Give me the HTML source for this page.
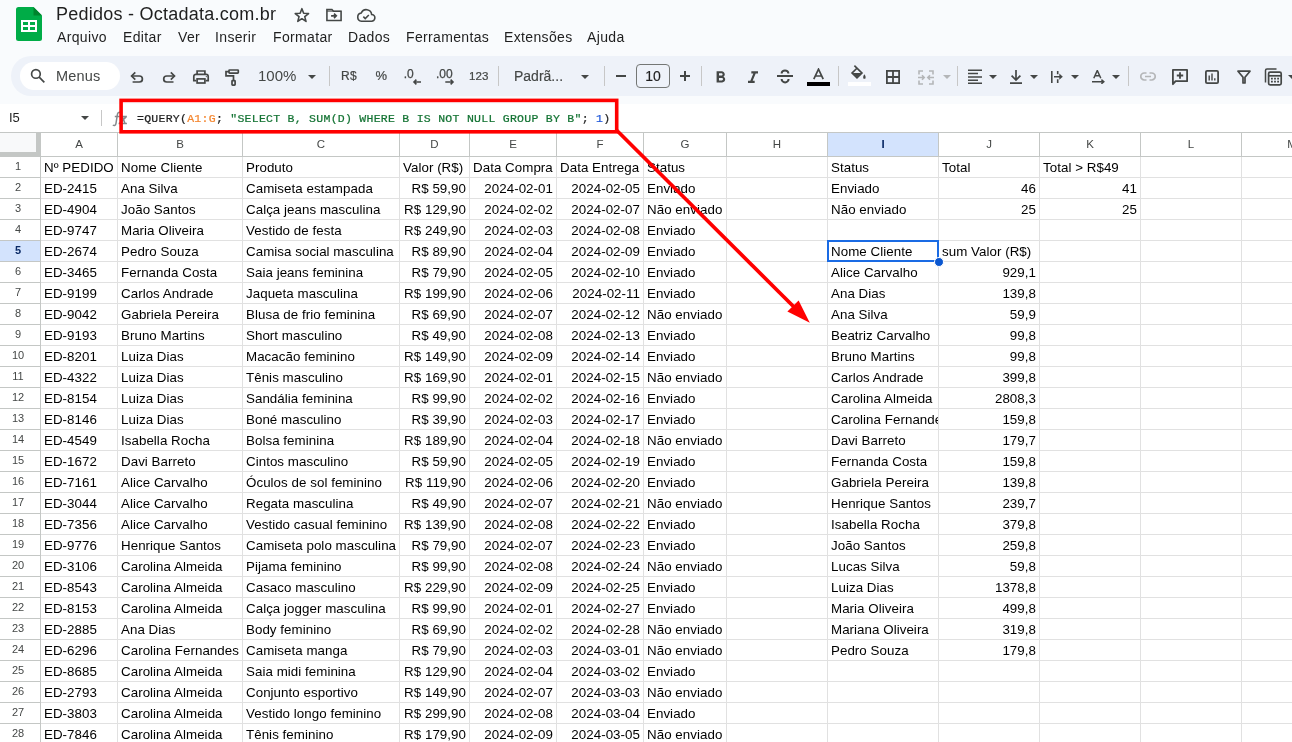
<!DOCTYPE html>
<html><head><meta charset="utf-8">
<style>
html,body{margin:0;padding:0}
body{width:1292px;height:742px;overflow:hidden;position:relative;will-change:transform;background:#f9fbfd;font-family:"Liberation Sans",sans-serif;color:#1f1f1f}
.a{position:absolute}
.ln{position:absolute}
.title{position:absolute;left:56px;top:3px;font-size:18px;line-height:22px;letter-spacing:0.25px;color:#1f1f1f;white-space:nowrap}
.menu{position:absolute;top:28px;font-size:14px;line-height:18px;letter-spacing:0.35px;color:#1f1f1f;white-space:nowrap}
.tb{position:absolute;left:11px;top:56px;width:1400px;height:40px;border-radius:20px;background:#eef2f9}
.sep{position:absolute;top:66px;width:1px;height:20px;background:#c7c7c7}
.ic{position:absolute}
.ttxt{position:absolute;font-size:14px;line-height:18px;color:#444746;white-space:nowrap}
.fbar{position:absolute;left:0;top:104px;width:1292px;height:28px;background:#fff}
.sheet{position:absolute;left:0;top:132px;width:1292px;height:610px;background:#fff}
.ch{position:absolute;top:133px;height:23px;line-height:23px;text-align:center;font-size:11.5px;color:#444746}
.ch.sel{color:#0a2a66;font-weight:bold}
.rn{position:absolute;left:0;width:36px;height:20px;line-height:20px;text-align:center;font-size:11px;color:#444746}
.rn.sel{color:#0a2a66;font-weight:bold}
.c{position:absolute;height:20px;line-height:21px;font-size:13.333px;letter-spacing:0.05px;color:#000;white-space:nowrap;overflow:hidden;box-sizing:border-box;padding:0 3px}
.c.r{text-align:right}
</style></head><body>

<!-- Sheets logo -->
<svg class="a" style="left:16px;top:7px" width="26" height="34" viewBox="0 0 26 34">
  <path d="M2.5 0H17.5L26 8.5V31.5Q26 34 23.5 34H2.5Q0 34 0 31.5V2.5Q0 0 2.5 0Z" fill="#00ac47"/>
  <path d="M17.5 0L26 8.5H17.5Z" fill="#00832d"/>
  <rect x="5" y="13" width="16" height="12" fill="#fff"/>
  <rect x="7" y="15" width="5" height="3" fill="#00ac47"/>
  <rect x="14" y="15" width="5" height="3" fill="#00ac47"/>
  <rect x="7" y="20" width="5" height="3" fill="#00ac47"/>
  <rect x="14" y="20" width="5" height="3" fill="#00ac47"/>
</svg>

<div class="title">Pedidos - Octadata.com.br</div>
<!-- star -->
<svg class="a" style="left:285px;top:0px" width="34" height="30" viewBox="0 0 34 30"><path d="M16.90 8.70 L18.66 13.27 L23.56 13.54 L19.75 16.63 L21.01 21.36 L16.90 18.70 L12.79 21.36 L14.05 16.63 L10.24 13.54 L15.14 13.27Z" fill="none" stroke="#444746" stroke-width="1.6" stroke-linejoin="round"/></svg>
<!-- folder move -->
<svg class="a" style="left:324px;top:5px" width="20" height="20" viewBox="0 0 24 24"><path d="M3.5 5.5h6l2 2h9v11h-17z" fill="none" stroke="#444746" stroke-width="1.9"/><path d="M3.5 7.5h17" stroke="#444746" stroke-width="1"/><path d="M8.5 13h6M12 10.3l2.8 2.7-2.8 2.7" fill="none" stroke="#444746" stroke-width="1.9"/></svg>
<!-- cloud done -->
<svg class="a" style="left:356px;top:5px" width="20" height="20" viewBox="0 0 24 24"><path d="M6.5 19.5h12a4 4 0 0 0 .3-8A6.5 6.5 0 0 0 6.3 9.6 5 5 0 0 0 6.5 19.5z" fill="none" stroke="#444746" stroke-width="1.9"/><path d="M8.8 14l2.3 2.3 4.3-4.3" fill="none" stroke="#444746" stroke-width="1.9"/></svg>

<div class="menu" style="left:57px">Arquivo</div>
<div class="menu" style="left:123px">Editar</div>
<div class="menu" style="left:178px">Ver</div>
<div class="menu" style="left:215px">Inserir</div>
<div class="menu" style="left:273px">Formatar</div>
<div class="menu" style="left:348px">Dados</div>
<div class="menu" style="left:406px">Ferramentas</div>
<div class="menu" style="left:504px">Extensões</div>
<div class="menu" style="left:587px">Ajuda</div>

<!-- toolbar -->
<div class="tb"></div>
<div class="a" style="left:20px;top:62px;width:100px;height:28px;border-radius:14px;background:#fff"></div>
<svg class="a" style="left:28px;top:66px" width="20" height="20" viewBox="0 0 24 24"><circle cx="9.5" cy="9.5" r="5.2" fill="none" stroke="#444746" stroke-width="2"/><path d="M13.4 13.4L19.6 19.6" stroke="#444746" stroke-width="2"/></svg>
<div class="ttxt" style="left:56px;top:66.5px;font-size:14.5px;letter-spacing:0.2px">Menus</div>

<!-- undo / redo / print / paint -->
<svg class="a" style="left:0;top:0" width="260" height="100" viewBox="0 0 260 100"><g fill="none" stroke="#444746" stroke-width="1.7">
<path d="M135.3 72.3L131.6 76l3.7 3.7"/><path d="M131.8 76H139.4a3 3 0 0 1 0 6H132.6"/>
<path d="M170.8 72.3L174.5 76l-3.7 3.7"/><path d="M174.3 76H166.7a3 3 0 0 0 0 6H173.5"/>
<path d="M197.1 74.2V71h7.8v3.2"/><path d="M196.3 80.6H193.8V76.4a2.1 2.1 0 0 1 2.1-2.1h10.2a2.1 2.1 0 0 1 2.1 2.1v4.2h-2.5"/><rect x="197.1" y="78.9" width="7.8" height="4.1"/>
<rect x="229" y="70" width="9.3" height="3.2" rx="0.6"/><path d="M229 71.6H226V75.9H233.5V80.3"/><rect x="232" y="80.6" width="3.1" height="4.6" rx="0.6"/>
</g><circle cx="206.3" cy="76.6" r="0.6" fill="#444746"/></svg>

<div class="ttxt" style="left:258px;top:67px;font-size:15px">100%</div>
<svg class="ic" style="left:308px;top:75px" width="8" height="4" viewBox="0 0 8 4"><path d="M0 0h8L4 4z" fill="#444746"/></svg>
<div class="sep" style="left:329px"></div>
<div class="ttxt" style="left:341px;top:67px;font-size:12px;letter-spacing:0.3px;-webkit-text-stroke:0.2px #444746">R$</div>
<div class="ttxt" style="left:375.5px;top:67px;font-size:13px;-webkit-text-stroke:0.2px #444746">%</div>
<svg class="ic" style="left:402px;top:64px" width="22" height="22" viewBox="0 0 22 22"><text x="1.7" y="14" font-family="Liberation Sans" font-size="12" fill="#444746" stroke="#444746" stroke-width="0.25">.0</text><path d="M19 18H12M14.4 15.6L12 18l2.4 2.4" fill="none" stroke="#444746" stroke-width="1.6"/></svg>
<svg class="ic" style="left:434px;top:64px" width="22" height="22" viewBox="0 0 22 22"><text x="2" y="14" font-family="Liberation Sans" font-size="12" fill="#444746" stroke="#444746" stroke-width="0.25">.00</text><path d="M11.3 18h7M16.6 15.6L19 18l-2.4 2.4" fill="none" stroke="#444746" stroke-width="1.6"/></svg>
<div class="ttxt" style="left:469px;top:67px;font-size:11.6px;-webkit-text-stroke:0.2px #444746">123</div>
<div class="sep" style="left:498px"></div>
<div class="ttxt" style="left:514px;top:67px;font-size:14px;-webkit-text-stroke:0.15px #444746">Padrã...</div>
<svg class="ic" style="left:581px;top:75px" width="8" height="4" viewBox="0 0 8 4"><path d="M0 0h8L4 4z" fill="#444746"/></svg>
<div class="sep" style="left:604px"></div>
<div class="a" style="left:616px;top:75px;width:10px;height:2px;background:#444746"></div>
<div class="a" style="left:636px;top:64px;width:32px;height:22px;border:1px solid #747775;border-radius:4px;box-sizing:content-box;text-align:center;line-height:22px;font-size:14px;color:#1f1f1f;-webkit-text-stroke:0.15px #1f1f1f">10</div>
<div class="a" style="left:680px;top:75px;width:10px;height:2px;background:#444746"></div>
<div class="a" style="left:684px;top:71px;width:2px;height:10px;background:#444746"></div>
<div class="sep" style="left:701px"></div>
<!-- B I S A -->
<svg class="ic" style="left:711px;top:68px" width="19.2" height="19.2" viewBox="0 0 24 24"><path d="M15.6 10.79c.97-.67 1.65-1.77 1.65-2.79 0-2.26-1.75-4-4-4H7v14h7.04c2.09 0 3.71-1.7 3.71-3.79 0-1.52-.86-2.82-2.15-3.42zM10 6.5h3c.83 0 1.5.67 1.5 1.5s-.67 1.5-1.5 1.5h-3v-3zm3.5 9H10v-3h3.5c.83 0 1.5.67 1.5 1.5s-.67 1.5-1.5 1.5z" fill="#444746"/></svg>
<svg class="ic" style="left:743px;top:67.6px" width="20" height="20" viewBox="0 0 24 24"><path d="M10 4v2.6h2.4l-3.6 8.8H6V18h8v-2.6h-2.4l3.6-8.8H18V4z" fill="#444746"/></svg>
<svg class="ic" style="left:776px;top:69px" width="18" height="16" viewBox="0 0 18 16"><rect x="1" y="6" width="16" height="2" fill="#444746"/><path d="M5.6 4.6A3.4 3.2 0 0 1 12.4 4.6" fill="none" stroke="#444746" stroke-width="2"/><path d="M5.6 10A3.5 3.4 0 0 0 12.6 10" fill="none" stroke="#444746" stroke-width="2"/></svg>
<svg class="ic" style="left:807px;top:68px" width="23" height="18" viewBox="0 0 23 18"><path d="M6.8 11.2L11.5 1.2 16.2 11.2M8.4 8h6.2" fill="none" stroke="#444746" stroke-width="1.7"/><rect x="0" y="14" width="23" height="4" fill="#000"/></svg>
<div class="sep" style="left:838px"></div>
<svg class="a" style="left:840px;top:60px" width="40" height="30" viewBox="840 60 40 30"><path d="M854.4 65.6L862 73.1 857 77.9 852 73.1 856.9 68.3" fill="none" stroke="#444746" stroke-width="1.6" stroke-linejoin="miter"/><path d="M852.4 73.1H861.6L857 77.6z" fill="#444746"/><path d="M864.4 74.3q1.9 2.3 1.2 3.6a1.25 1.25 0 0 1-2.4 0q-.7-1.3 1.2-3.6z" fill="#444746"/><rect x="848" y="82" width="23" height="4" fill="#fff"/></svg>
<svg class="ic" style="left:885px;top:69px" width="16" height="16" viewBox="0 0 16 16"><rect x="1.9" y="1.9" width="12.2" height="12.2" fill="none" stroke="#444746" stroke-width="1.8"/><path d="M8 1v14M1 8h14" stroke="#444746" stroke-width="1.8"/></svg>
<svg class="ic" style="left:917px;top:70px" width="18" height="15" viewBox="0 0 18 15"><path d="M2 4.5V1h4M12 1h4v3.5M2 10.5V14h4M12 14h4v-3.5M1 7.5h6M5 5.3l2.2 2.2L5 9.7M17 7.5h-6M13 5.3l-2.2 2.2L13 9.7" fill="none" stroke="#b4b6b8" stroke-width="1.6"/></svg>
<svg class="ic" style="left:943px;top:75px" width="8" height="4" viewBox="0 0 8 4"><path d="M0 0h8L4 4z" fill="#b4b6b8"/></svg>
<div class="sep" style="left:957px"></div>
<svg class="ic" style="left:968px;top:69px" width="15" height="15" viewBox="0 0 15 15"><path d="M0 1.2h14M0 4.6h10M0 8h14M0 11.2h10M0 14.3h14" stroke="#444746" stroke-width="1.5"/></svg>
<svg class="ic" style="left:989px;top:75px" width="8" height="4" viewBox="0 0 8 4"><path d="M0 0h8L4 4z" fill="#444746"/></svg>
<svg class="ic" style="left:1010px;top:70px" width="12" height="14" viewBox="0 0 12 14"><path d="M6 0v9.5M1.6 5.6L6 10l4.4-4.4M0 13.1h12" fill="none" stroke="#444746" stroke-width="1.7"/></svg>
<svg class="ic" style="left:1030px;top:75px" width="8" height="4" viewBox="0 0 8 4"><path d="M0 0h8L4 4z" fill="#444746"/></svg>
<svg class="a" style="left:1040px;top:60px" width="30" height="30" viewBox="1040 60 30 30"><path d="M1051.8 71V83M1057.7 71V74.2M1057.7 79.2V83M1054 76.7H1060" fill="none" stroke="#444746" stroke-width="1.6"/><path d="M1059.3 73.6L1062.8 76.7 1059.3 79.8z" fill="#444746"/></svg>
<svg class="ic" style="left:1071px;top:75px" width="8" height="4" viewBox="0 0 8 4"><path d="M0 0h8L4 4z" fill="#444746"/></svg>
<svg class="ic" style="left:1092px;top:70px" width="13" height="14" viewBox="0 0 13 14"><path d="M1.8 8.3L5.3 0.5 8.8 8.3M2.9 5.8h4.8M0 11.7h11.5M9.4 9.6l2.4 2.1-2.4 2.1" fill="none" stroke="#444746" stroke-width="1.5"/></svg>
<svg class="ic" style="left:1112px;top:75px" width="8" height="4" viewBox="0 0 8 4"><path d="M0 0h8L4 4z" fill="#444746"/></svg>
<div class="sep" style="left:1128px"></div>
<svg class="ic" style="left:1140px;top:72px" width="16" height="9" viewBox="0 0 16 9"><path d="M6.5 1H4.3a3.5 3.5 0 0 0 0 7h2.2M9.5 1h2.2a3.5 3.5 0 0 1 0 7H9.5M5 4.5h6" fill="none" stroke="#b4b6b8" stroke-width="1.7"/></svg>
<svg class="ic" style="left:1171px;top:68px" width="18" height="18" viewBox="0 0 18 18"><path d="M1.9 1.9h14.2v11.3H4.6L1.9 16.2z" fill="none" stroke="#444746" stroke-width="1.8" stroke-linejoin="round"/><path d="M9 4.3v6.4M5.8 7.5h6.4" stroke="#444746" stroke-width="1.8"/></svg>
<svg class="ic" style="left:1204px;top:69px" width="16" height="16" viewBox="0 0 16 16"><rect x="1.9" y="1.9" width="12.2" height="12.2" rx="1.2" fill="none" stroke="#444746" stroke-width="1.8"/><path d="M5.2 6.5v5M8 4.4v7.1M10.8 9.3v2.2" stroke="#444746" stroke-width="1.4"/></svg>
<svg class="ic" style="left:1237px;top:70px" width="14" height="14" viewBox="0 0 14 14"><path d="M1 1.2h12L8 7.2V13H6V7.2z" fill="none" stroke="#444746" stroke-width="1.7" stroke-linejoin="round"/></svg>
<svg class="ic" style="left:1264px;top:68px" width="19" height="18" viewBox="0 0 19 18"><path d="M1.5 14.5V2.5a1.5 1.5 0 0 1 1.5-1.5h9.5" fill="none" stroke="#444746" stroke-width="1.5"/><rect x="4.6" y="4.2" width="12.6" height="12.6" rx="1.5" fill="none" stroke="#444746" stroke-width="1.7"/><path d="M4.6 7.8h12.6" stroke="#444746" stroke-width="1.7"/><path d="M7 10.6h1.8M10.1 10.6h1.8M13.2 10.6h1.8M7 13.6h1.8M10.1 13.6h1.8M13.2 13.6h1.8" stroke="#444746" stroke-width="1.8"/></svg>
<svg class="ic" style="left:1288px;top:75px" width="8" height="4" viewBox="0 0 8 4"><path d="M0 0h8L4 4z" fill="#444746"/></svg>

<!-- formula bar -->
<div class="fbar"></div>
<div class="a" style="left:9px;top:110px;font-size:13px;line-height:16px;color:#1f1f1f">I5</div>
<svg class="ic" style="left:81px;top:116px" width="8" height="4" viewBox="0 0 8 4"><path d="M0 0h8L4 4z" fill="#444746"/></svg>
<div class="a" style="left:101px;top:110px;width:1px;height:16px;background:#c7c7c7"></div>
<svg class="a" style="left:0;top:0" width="140" height="132" viewBox="0 0 140 132"><g fill="none" stroke="#85898c" stroke-width="1.5"><path d="M120.2 112.2C118.4 111.9 117.6 113 117.3 115L116 123.3C115.6 125.6 114.3 126 112.8 125"/><path d="M114.8 116.6H119.6M122 116.6H126.9M118.6 123.4H126.9M122.3 116.6L125 123.4M126.3 116.6L119.6 123.4"/></g></svg>
<div class="a" style="left:137px;top:112px;font-family:'Liberation Mono',monospace;font-size:11.5px;letter-spacing:0.27px;line-height:14px;color:#1f1f1f;white-space:pre;-webkit-text-stroke:0.22px currentColor">=QUERY(<span style="color:#f4852e">A1:G</span>; <span style="color:#137333">"SELECT B, SUM(D) WHERE B IS NOT NULL GROUP BY B"</span>; <span style="color:#1a54d8">1</span>)</div>

<!-- sheet -->
<div class="sheet"></div>
<!-- corner -->
<div class="a" style="left:0;top:133px;width:36px;height:19px;background:#f8f9fa"></div>
<div class="a" style="left:36px;top:133px;width:4px;height:23px;background:#c4c7c5"></div>
<div class="a" style="left:0;top:152px;width:40px;height:4px;background:#c4c7c5"></div>

<div class="ln" style="left:0;top:132px;width:1292px;height:1px;background:#c4c7c5"></div>
<div class="ln" style="left:0;top:156px;width:1292px;height:1px;background:#c4c7c5"></div>
<div class="ln" style="left:117px;top:132px;width:1px;height:24px;background:#c4c7c5"></div>
<div class="ln" style="left:242px;top:132px;width:1px;height:24px;background:#c4c7c5"></div>
<div class="ln" style="left:399px;top:132px;width:1px;height:24px;background:#c4c7c5"></div>
<div class="ln" style="left:469px;top:132px;width:1px;height:24px;background:#c4c7c5"></div>
<div class="ln" style="left:556px;top:132px;width:1px;height:24px;background:#c4c7c5"></div>
<div class="ln" style="left:643px;top:132px;width:1px;height:24px;background:#c4c7c5"></div>
<div class="ln" style="left:726px;top:132px;width:1px;height:24px;background:#c4c7c5"></div>
<div class="ln" style="left:827px;top:132px;width:1px;height:24px;background:#c4c7c5"></div>
<div class="ln" style="left:938px;top:132px;width:1px;height:24px;background:#c4c7c5"></div>
<div class="ln" style="left:1039px;top:132px;width:1px;height:24px;background:#c4c7c5"></div>
<div class="ln" style="left:1140px;top:132px;width:1px;height:24px;background:#c4c7c5"></div>
<div class="ln" style="left:1241px;top:132px;width:1px;height:24px;background:#c4c7c5"></div>
<div class="ln" style="left:40px;top:132px;width:1px;height:610px;background:#c4c7c5"></div>
<div class="ln" style="left:0;top:177px;width:40px;height:1px;background:#c4c7c5"></div>
<div class="ln" style="left:41px;top:177px;width:1251px;height:1px;background:#e1e1e1"></div>
<div class="ln" style="left:0;top:198px;width:40px;height:1px;background:#c4c7c5"></div>
<div class="ln" style="left:41px;top:198px;width:1251px;height:1px;background:#e1e1e1"></div>
<div class="ln" style="left:0;top:219px;width:40px;height:1px;background:#c4c7c5"></div>
<div class="ln" style="left:41px;top:219px;width:1251px;height:1px;background:#e1e1e1"></div>
<div class="ln" style="left:0;top:240px;width:40px;height:1px;background:#c4c7c5"></div>
<div class="ln" style="left:41px;top:240px;width:1251px;height:1px;background:#e1e1e1"></div>
<div class="ln" style="left:0;top:261px;width:40px;height:1px;background:#c4c7c5"></div>
<div class="ln" style="left:41px;top:261px;width:1251px;height:1px;background:#e1e1e1"></div>
<div class="ln" style="left:0;top:282px;width:40px;height:1px;background:#c4c7c5"></div>
<div class="ln" style="left:41px;top:282px;width:1251px;height:1px;background:#e1e1e1"></div>
<div class="ln" style="left:0;top:303px;width:40px;height:1px;background:#c4c7c5"></div>
<div class="ln" style="left:41px;top:303px;width:1251px;height:1px;background:#e1e1e1"></div>
<div class="ln" style="left:0;top:324px;width:40px;height:1px;background:#c4c7c5"></div>
<div class="ln" style="left:41px;top:324px;width:1251px;height:1px;background:#e1e1e1"></div>
<div class="ln" style="left:0;top:345px;width:40px;height:1px;background:#c4c7c5"></div>
<div class="ln" style="left:41px;top:345px;width:1251px;height:1px;background:#e1e1e1"></div>
<div class="ln" style="left:0;top:366px;width:40px;height:1px;background:#c4c7c5"></div>
<div class="ln" style="left:41px;top:366px;width:1251px;height:1px;background:#e1e1e1"></div>
<div class="ln" style="left:0;top:387px;width:40px;height:1px;background:#c4c7c5"></div>
<div class="ln" style="left:41px;top:387px;width:1251px;height:1px;background:#e1e1e1"></div>
<div class="ln" style="left:0;top:408px;width:40px;height:1px;background:#c4c7c5"></div>
<div class="ln" style="left:41px;top:408px;width:1251px;height:1px;background:#e1e1e1"></div>
<div class="ln" style="left:0;top:429px;width:40px;height:1px;background:#c4c7c5"></div>
<div class="ln" style="left:41px;top:429px;width:1251px;height:1px;background:#e1e1e1"></div>
<div class="ln" style="left:0;top:450px;width:40px;height:1px;background:#c4c7c5"></div>
<div class="ln" style="left:41px;top:450px;width:1251px;height:1px;background:#e1e1e1"></div>
<div class="ln" style="left:0;top:471px;width:40px;height:1px;background:#c4c7c5"></div>
<div class="ln" style="left:41px;top:471px;width:1251px;height:1px;background:#e1e1e1"></div>
<div class="ln" style="left:0;top:492px;width:40px;height:1px;background:#c4c7c5"></div>
<div class="ln" style="left:41px;top:492px;width:1251px;height:1px;background:#e1e1e1"></div>
<div class="ln" style="left:0;top:513px;width:40px;height:1px;background:#c4c7c5"></div>
<div class="ln" style="left:41px;top:513px;width:1251px;height:1px;background:#e1e1e1"></div>
<div class="ln" style="left:0;top:534px;width:40px;height:1px;background:#c4c7c5"></div>
<div class="ln" style="left:41px;top:534px;width:1251px;height:1px;background:#e1e1e1"></div>
<div class="ln" style="left:0;top:555px;width:40px;height:1px;background:#c4c7c5"></div>
<div class="ln" style="left:41px;top:555px;width:1251px;height:1px;background:#e1e1e1"></div>
<div class="ln" style="left:0;top:576px;width:40px;height:1px;background:#c4c7c5"></div>
<div class="ln" style="left:41px;top:576px;width:1251px;height:1px;background:#e1e1e1"></div>
<div class="ln" style="left:0;top:597px;width:40px;height:1px;background:#c4c7c5"></div>
<div class="ln" style="left:41px;top:597px;width:1251px;height:1px;background:#e1e1e1"></div>
<div class="ln" style="left:0;top:618px;width:40px;height:1px;background:#c4c7c5"></div>
<div class="ln" style="left:41px;top:618px;width:1251px;height:1px;background:#e1e1e1"></div>
<div class="ln" style="left:0;top:639px;width:40px;height:1px;background:#c4c7c5"></div>
<div class="ln" style="left:41px;top:639px;width:1251px;height:1px;background:#e1e1e1"></div>
<div class="ln" style="left:0;top:660px;width:40px;height:1px;background:#c4c7c5"></div>
<div class="ln" style="left:41px;top:660px;width:1251px;height:1px;background:#e1e1e1"></div>
<div class="ln" style="left:0;top:681px;width:40px;height:1px;background:#c4c7c5"></div>
<div class="ln" style="left:41px;top:681px;width:1251px;height:1px;background:#e1e1e1"></div>
<div class="ln" style="left:0;top:702px;width:40px;height:1px;background:#c4c7c5"></div>
<div class="ln" style="left:41px;top:702px;width:1251px;height:1px;background:#e1e1e1"></div>
<div class="ln" style="left:0;top:723px;width:40px;height:1px;background:#c4c7c5"></div>
<div class="ln" style="left:41px;top:723px;width:1251px;height:1px;background:#e1e1e1"></div>
<div class="ln" style="left:0;top:744px;width:40px;height:1px;background:#c4c7c5"></div>
<div class="ln" style="left:41px;top:744px;width:1251px;height:1px;background:#e1e1e1"></div>
<div class="ln" style="left:117px;top:157px;width:1px;height:585px;background:#e1e1e1"></div>
<div class="ln" style="left:242px;top:157px;width:1px;height:585px;background:#e1e1e1"></div>
<div class="ln" style="left:399px;top:157px;width:1px;height:585px;background:#e1e1e1"></div>
<div class="ln" style="left:469px;top:157px;width:1px;height:585px;background:#e1e1e1"></div>
<div class="ln" style="left:556px;top:157px;width:1px;height:585px;background:#e1e1e1"></div>
<div class="ln" style="left:643px;top:157px;width:1px;height:585px;background:#e1e1e1"></div>
<div class="ln" style="left:726px;top:157px;width:1px;height:585px;background:#e1e1e1"></div>
<div class="ln" style="left:827px;top:157px;width:1px;height:585px;background:#e1e1e1"></div>
<div class="ln" style="left:938px;top:157px;width:1px;height:585px;background:#e1e1e1"></div>
<div class="ln" style="left:1039px;top:157px;width:1px;height:585px;background:#e1e1e1"></div>
<div class="ln" style="left:1140px;top:157px;width:1px;height:585px;background:#e1e1e1"></div>
<div class="ln" style="left:1241px;top:157px;width:1px;height:585px;background:#e1e1e1"></div>
<div class="ln" style="left:828px;top:133px;width:110px;height:23px;background:#d3e3fd"></div>
<div class="ln" style="left:0;top:241px;width:40px;height:20px;background:#d3e3fd"></div>
<div class="ch" style="left:41px;width:76px">A</div>
<div class="ch" style="left:118px;width:124px">B</div>
<div class="ch" style="left:243px;width:156px">C</div>
<div class="ch" style="left:400px;width:69px">D</div>
<div class="ch" style="left:470px;width:86px">E</div>
<div class="ch" style="left:557px;width:86px">F</div>
<div class="ch" style="left:644px;width:82px">G</div>
<div class="ch" style="left:727px;width:100px">H</div>
<div class="ch sel" style="left:828px;width:110px">I</div>
<div class="ch" style="left:939px;width:100px">J</div>
<div class="ch" style="left:1040px;width:100px">K</div>
<div class="ch" style="left:1141px;width:100px">L</div>
<div class="ch" style="left:1242px;width:100px">M</div>
<div class="rn" style="top:156px">1</div>
<div class="rn" style="top:177px">2</div>
<div class="rn" style="top:198px">3</div>
<div class="rn" style="top:219px">4</div>
<div class="rn sel" style="top:240px">5</div>
<div class="rn" style="top:261px">6</div>
<div class="rn" style="top:282px">7</div>
<div class="rn" style="top:303px">8</div>
<div class="rn" style="top:324px">9</div>
<div class="rn" style="top:345px">10</div>
<div class="rn" style="top:366px">11</div>
<div class="rn" style="top:387px">12</div>
<div class="rn" style="top:408px">13</div>
<div class="rn" style="top:429px">14</div>
<div class="rn" style="top:450px">15</div>
<div class="rn" style="top:471px">16</div>
<div class="rn" style="top:492px">17</div>
<div class="rn" style="top:513px">18</div>
<div class="rn" style="top:534px">19</div>
<div class="rn" style="top:555px">20</div>
<div class="rn" style="top:576px">21</div>
<div class="rn" style="top:597px">22</div>
<div class="rn" style="top:618px">23</div>
<div class="rn" style="top:639px">24</div>
<div class="rn" style="top:660px">25</div>
<div class="rn" style="top:681px">26</div>
<div class="rn" style="top:702px">27</div>
<div class="rn" style="top:723px">28</div>
<div class="c" style="left:41px;top:157px;width:76px">Nº PEDIDO</div>
<div class="c" style="left:118px;top:157px;width:124px">Nome Cliente</div>
<div class="c" style="left:243px;top:157px;width:156px">Produto</div>
<div class="c" style="left:400px;top:157px;width:69px">Valor (R$)</div>
<div class="c" style="left:470px;top:157px;width:86px">Data Compra</div>
<div class="c" style="left:557px;top:157px;width:86px">Data Entrega</div>
<div class="c" style="left:644px;top:157px;width:82px">Status</div>
<div class="c" style="left:41px;top:178px;width:76px">ED-2415</div>
<div class="c" style="left:118px;top:178px;width:124px">Ana Silva</div>
<div class="c" style="left:243px;top:178px;width:156px">Camiseta estampada</div>
<div class="c r" style="left:400px;top:178px;width:69px">R$ 59,90</div>
<div class="c r" style="left:470px;top:178px;width:86px">2024-02-01</div>
<div class="c r" style="left:557px;top:178px;width:86px">2024-02-05</div>
<div class="c" style="left:644px;top:178px;width:82px">Enviado</div>
<div class="c" style="left:41px;top:199px;width:76px">ED-4904</div>
<div class="c" style="left:118px;top:199px;width:124px">João Santos</div>
<div class="c" style="left:243px;top:199px;width:156px">Calça jeans masculina</div>
<div class="c r" style="left:400px;top:199px;width:69px">R$ 129,90</div>
<div class="c r" style="left:470px;top:199px;width:86px">2024-02-02</div>
<div class="c r" style="left:557px;top:199px;width:86px">2024-02-07</div>
<div class="c" style="left:644px;top:199px;width:82px">Não enviado</div>
<div class="c" style="left:41px;top:220px;width:76px">ED-9747</div>
<div class="c" style="left:118px;top:220px;width:124px">Maria Oliveira</div>
<div class="c" style="left:243px;top:220px;width:156px">Vestido de festa</div>
<div class="c r" style="left:400px;top:220px;width:69px">R$ 249,90</div>
<div class="c r" style="left:470px;top:220px;width:86px">2024-02-03</div>
<div class="c r" style="left:557px;top:220px;width:86px">2024-02-08</div>
<div class="c" style="left:644px;top:220px;width:82px">Enviado</div>
<div class="c" style="left:41px;top:241px;width:76px">ED-2674</div>
<div class="c" style="left:118px;top:241px;width:124px">Pedro Souza</div>
<div class="c" style="left:243px;top:241px;width:156px">Camisa social masculina</div>
<div class="c r" style="left:400px;top:241px;width:69px">R$ 89,90</div>
<div class="c r" style="left:470px;top:241px;width:86px">2024-02-04</div>
<div class="c r" style="left:557px;top:241px;width:86px">2024-02-09</div>
<div class="c" style="left:644px;top:241px;width:82px">Enviado</div>
<div class="c" style="left:41px;top:262px;width:76px">ED-3465</div>
<div class="c" style="left:118px;top:262px;width:124px">Fernanda Costa</div>
<div class="c" style="left:243px;top:262px;width:156px">Saia jeans feminina</div>
<div class="c r" style="left:400px;top:262px;width:69px">R$ 79,90</div>
<div class="c r" style="left:470px;top:262px;width:86px">2024-02-05</div>
<div class="c r" style="left:557px;top:262px;width:86px">2024-02-10</div>
<div class="c" style="left:644px;top:262px;width:82px">Enviado</div>
<div class="c" style="left:41px;top:283px;width:76px">ED-9199</div>
<div class="c" style="left:118px;top:283px;width:124px">Carlos Andrade</div>
<div class="c" style="left:243px;top:283px;width:156px">Jaqueta masculina</div>
<div class="c r" style="left:400px;top:283px;width:69px">R$ 199,90</div>
<div class="c r" style="left:470px;top:283px;width:86px">2024-02-06</div>
<div class="c r" style="left:557px;top:283px;width:86px">2024-02-11</div>
<div class="c" style="left:644px;top:283px;width:82px">Enviado</div>
<div class="c" style="left:41px;top:304px;width:76px">ED-9042</div>
<div class="c" style="left:118px;top:304px;width:124px">Gabriela Pereira</div>
<div class="c" style="left:243px;top:304px;width:156px">Blusa de frio feminina</div>
<div class="c r" style="left:400px;top:304px;width:69px">R$ 69,90</div>
<div class="c r" style="left:470px;top:304px;width:86px">2024-02-07</div>
<div class="c r" style="left:557px;top:304px;width:86px">2024-02-12</div>
<div class="c" style="left:644px;top:304px;width:82px">Não enviado</div>
<div class="c" style="left:41px;top:325px;width:76px">ED-9193</div>
<div class="c" style="left:118px;top:325px;width:124px">Bruno Martins</div>
<div class="c" style="left:243px;top:325px;width:156px">Short masculino</div>
<div class="c r" style="left:400px;top:325px;width:69px">R$ 49,90</div>
<div class="c r" style="left:470px;top:325px;width:86px">2024-02-08</div>
<div class="c r" style="left:557px;top:325px;width:86px">2024-02-13</div>
<div class="c" style="left:644px;top:325px;width:82px">Enviado</div>
<div class="c" style="left:41px;top:346px;width:76px">ED-8201</div>
<div class="c" style="left:118px;top:346px;width:124px">Luiza Dias</div>
<div class="c" style="left:243px;top:346px;width:156px">Macacão feminino</div>
<div class="c r" style="left:400px;top:346px;width:69px">R$ 149,90</div>
<div class="c r" style="left:470px;top:346px;width:86px">2024-02-09</div>
<div class="c r" style="left:557px;top:346px;width:86px">2024-02-14</div>
<div class="c" style="left:644px;top:346px;width:82px">Enviado</div>
<div class="c" style="left:41px;top:367px;width:76px">ED-4322</div>
<div class="c" style="left:118px;top:367px;width:124px">Luiza Dias</div>
<div class="c" style="left:243px;top:367px;width:156px">Tênis masculino</div>
<div class="c r" style="left:400px;top:367px;width:69px">R$ 169,90</div>
<div class="c r" style="left:470px;top:367px;width:86px">2024-02-01</div>
<div class="c r" style="left:557px;top:367px;width:86px">2024-02-15</div>
<div class="c" style="left:644px;top:367px;width:82px">Não enviado</div>
<div class="c" style="left:41px;top:388px;width:76px">ED-8154</div>
<div class="c" style="left:118px;top:388px;width:124px">Luiza Dias</div>
<div class="c" style="left:243px;top:388px;width:156px">Sandália feminina</div>
<div class="c r" style="left:400px;top:388px;width:69px">R$ 99,90</div>
<div class="c r" style="left:470px;top:388px;width:86px">2024-02-02</div>
<div class="c r" style="left:557px;top:388px;width:86px">2024-02-16</div>
<div class="c" style="left:644px;top:388px;width:82px">Enviado</div>
<div class="c" style="left:41px;top:409px;width:76px">ED-8146</div>
<div class="c" style="left:118px;top:409px;width:124px">Luiza Dias</div>
<div class="c" style="left:243px;top:409px;width:156px">Boné masculino</div>
<div class="c r" style="left:400px;top:409px;width:69px">R$ 39,90</div>
<div class="c r" style="left:470px;top:409px;width:86px">2024-02-03</div>
<div class="c r" style="left:557px;top:409px;width:86px">2024-02-17</div>
<div class="c" style="left:644px;top:409px;width:82px">Enviado</div>
<div class="c" style="left:41px;top:430px;width:76px">ED-4549</div>
<div class="c" style="left:118px;top:430px;width:124px">Isabella Rocha</div>
<div class="c" style="left:243px;top:430px;width:156px">Bolsa feminina</div>
<div class="c r" style="left:400px;top:430px;width:69px">R$ 189,90</div>
<div class="c r" style="left:470px;top:430px;width:86px">2024-02-04</div>
<div class="c r" style="left:557px;top:430px;width:86px">2024-02-18</div>
<div class="c" style="left:644px;top:430px;width:82px">Não enviado</div>
<div class="c" style="left:41px;top:451px;width:76px">ED-1672</div>
<div class="c" style="left:118px;top:451px;width:124px">Davi Barreto</div>
<div class="c" style="left:243px;top:451px;width:156px">Cintos masculino</div>
<div class="c r" style="left:400px;top:451px;width:69px">R$ 59,90</div>
<div class="c r" style="left:470px;top:451px;width:86px">2024-02-05</div>
<div class="c r" style="left:557px;top:451px;width:86px">2024-02-19</div>
<div class="c" style="left:644px;top:451px;width:82px">Enviado</div>
<div class="c" style="left:41px;top:472px;width:76px">ED-7161</div>
<div class="c" style="left:118px;top:472px;width:124px">Alice Carvalho</div>
<div class="c" style="left:243px;top:472px;width:156px">Óculos de sol feminino</div>
<div class="c r" style="left:400px;top:472px;width:69px">R$ 119,90</div>
<div class="c r" style="left:470px;top:472px;width:86px">2024-02-06</div>
<div class="c r" style="left:557px;top:472px;width:86px">2024-02-20</div>
<div class="c" style="left:644px;top:472px;width:82px">Enviado</div>
<div class="c" style="left:41px;top:493px;width:76px">ED-3044</div>
<div class="c" style="left:118px;top:493px;width:124px">Alice Carvalho</div>
<div class="c" style="left:243px;top:493px;width:156px">Regata masculina</div>
<div class="c r" style="left:400px;top:493px;width:69px">R$ 49,90</div>
<div class="c r" style="left:470px;top:493px;width:86px">2024-02-07</div>
<div class="c r" style="left:557px;top:493px;width:86px">2024-02-21</div>
<div class="c" style="left:644px;top:493px;width:82px">Não enviado</div>
<div class="c" style="left:41px;top:514px;width:76px">ED-7356</div>
<div class="c" style="left:118px;top:514px;width:124px">Alice Carvalho</div>
<div class="c" style="left:243px;top:514px;width:156px">Vestido casual feminino</div>
<div class="c r" style="left:400px;top:514px;width:69px">R$ 139,90</div>
<div class="c r" style="left:470px;top:514px;width:86px">2024-02-08</div>
<div class="c r" style="left:557px;top:514px;width:86px">2024-02-22</div>
<div class="c" style="left:644px;top:514px;width:82px">Enviado</div>
<div class="c" style="left:41px;top:535px;width:76px">ED-9776</div>
<div class="c" style="left:118px;top:535px;width:124px">Henrique Santos</div>
<div class="c" style="left:243px;top:535px;width:156px">Camiseta polo masculina</div>
<div class="c r" style="left:400px;top:535px;width:69px">R$ 79,90</div>
<div class="c r" style="left:470px;top:535px;width:86px">2024-02-07</div>
<div class="c r" style="left:557px;top:535px;width:86px">2024-02-23</div>
<div class="c" style="left:644px;top:535px;width:82px">Enviado</div>
<div class="c" style="left:41px;top:556px;width:76px">ED-3106</div>
<div class="c" style="left:118px;top:556px;width:124px">Carolina Almeida</div>
<div class="c" style="left:243px;top:556px;width:156px">Pijama feminino</div>
<div class="c r" style="left:400px;top:556px;width:69px">R$ 99,90</div>
<div class="c r" style="left:470px;top:556px;width:86px">2024-02-08</div>
<div class="c r" style="left:557px;top:556px;width:86px">2024-02-24</div>
<div class="c" style="left:644px;top:556px;width:82px">Não enviado</div>
<div class="c" style="left:41px;top:577px;width:76px">ED-8543</div>
<div class="c" style="left:118px;top:577px;width:124px">Carolina Almeida</div>
<div class="c" style="left:243px;top:577px;width:156px">Casaco masculino</div>
<div class="c r" style="left:400px;top:577px;width:69px">R$ 229,90</div>
<div class="c r" style="left:470px;top:577px;width:86px">2024-02-09</div>
<div class="c r" style="left:557px;top:577px;width:86px">2024-02-25</div>
<div class="c" style="left:644px;top:577px;width:82px">Enviado</div>
<div class="c" style="left:41px;top:598px;width:76px">ED-8153</div>
<div class="c" style="left:118px;top:598px;width:124px">Carolina Almeida</div>
<div class="c" style="left:243px;top:598px;width:156px">Calça jogger masculina</div>
<div class="c r" style="left:400px;top:598px;width:69px">R$ 99,90</div>
<div class="c r" style="left:470px;top:598px;width:86px">2024-02-01</div>
<div class="c r" style="left:557px;top:598px;width:86px">2024-02-27</div>
<div class="c" style="left:644px;top:598px;width:82px">Enviado</div>
<div class="c" style="left:41px;top:619px;width:76px">ED-2885</div>
<div class="c" style="left:118px;top:619px;width:124px">Ana Dias</div>
<div class="c" style="left:243px;top:619px;width:156px">Body feminino</div>
<div class="c r" style="left:400px;top:619px;width:69px">R$ 69,90</div>
<div class="c r" style="left:470px;top:619px;width:86px">2024-02-02</div>
<div class="c r" style="left:557px;top:619px;width:86px">2024-02-28</div>
<div class="c" style="left:644px;top:619px;width:82px">Não enviado</div>
<div class="c" style="left:41px;top:640px;width:76px">ED-6296</div>
<div class="c" style="left:118px;top:640px;width:124px">Carolina Fernandes</div>
<div class="c" style="left:243px;top:640px;width:156px">Camiseta manga</div>
<div class="c r" style="left:400px;top:640px;width:69px">R$ 79,90</div>
<div class="c r" style="left:470px;top:640px;width:86px">2024-02-03</div>
<div class="c r" style="left:557px;top:640px;width:86px">2024-03-01</div>
<div class="c" style="left:644px;top:640px;width:82px">Não enviado</div>
<div class="c" style="left:41px;top:661px;width:76px">ED-8685</div>
<div class="c" style="left:118px;top:661px;width:124px">Carolina Almeida</div>
<div class="c" style="left:243px;top:661px;width:156px">Saia midi feminina</div>
<div class="c r" style="left:400px;top:661px;width:69px">R$ 129,90</div>
<div class="c r" style="left:470px;top:661px;width:86px">2024-02-04</div>
<div class="c r" style="left:557px;top:661px;width:86px">2024-03-02</div>
<div class="c" style="left:644px;top:661px;width:82px">Enviado</div>
<div class="c" style="left:41px;top:682px;width:76px">ED-2793</div>
<div class="c" style="left:118px;top:682px;width:124px">Carolina Almeida</div>
<div class="c" style="left:243px;top:682px;width:156px">Conjunto esportivo</div>
<div class="c r" style="left:400px;top:682px;width:69px">R$ 149,90</div>
<div class="c r" style="left:470px;top:682px;width:86px">2024-02-07</div>
<div class="c r" style="left:557px;top:682px;width:86px">2024-03-03</div>
<div class="c" style="left:644px;top:682px;width:82px">Não enviado</div>
<div class="c" style="left:41px;top:703px;width:76px">ED-3803</div>
<div class="c" style="left:118px;top:703px;width:124px">Carolina Almeida</div>
<div class="c" style="left:243px;top:703px;width:156px">Vestido longo feminino</div>
<div class="c r" style="left:400px;top:703px;width:69px">R$ 299,90</div>
<div class="c r" style="left:470px;top:703px;width:86px">2024-02-08</div>
<div class="c r" style="left:557px;top:703px;width:86px">2024-03-04</div>
<div class="c" style="left:644px;top:703px;width:82px">Enviado</div>
<div class="c" style="left:41px;top:724px;width:76px">ED-7846</div>
<div class="c" style="left:118px;top:724px;width:124px">Carolina Almeida</div>
<div class="c" style="left:243px;top:724px;width:156px">Tênis feminino</div>
<div class="c r" style="left:400px;top:724px;width:69px">R$ 179,90</div>
<div class="c r" style="left:470px;top:724px;width:86px">2024-02-09</div>
<div class="c r" style="left:557px;top:724px;width:86px">2024-03-05</div>
<div class="c" style="left:644px;top:724px;width:82px">Não enviado</div>
<div class="c" style="left:828px;top:157px;width:110px">Status</div>
<div class="c" style="left:828px;top:178px;width:110px">Enviado</div>
<div class="c" style="left:828px;top:199px;width:110px">Não enviado</div>
<div class="c" style="left:828px;top:241px;width:110px">Nome Cliente</div>
<div class="c" style="left:828px;top:262px;width:110px">Alice Carvalho</div>
<div class="c" style="left:828px;top:283px;width:110px">Ana Dias</div>
<div class="c" style="left:828px;top:304px;width:110px">Ana Silva</div>
<div class="c" style="left:828px;top:325px;width:110px">Beatriz Carvalho</div>
<div class="c" style="left:828px;top:346px;width:110px">Bruno Martins</div>
<div class="c" style="left:828px;top:367px;width:110px">Carlos Andrade</div>
<div class="c" style="left:828px;top:388px;width:110px">Carolina Almeida</div>
<div class="c" style="left:828px;top:409px;width:110px">Carolina Fernandes</div>
<div class="c" style="left:828px;top:430px;width:110px">Davi Barreto</div>
<div class="c" style="left:828px;top:451px;width:110px">Fernanda Costa</div>
<div class="c" style="left:828px;top:472px;width:110px">Gabriela Pereira</div>
<div class="c" style="left:828px;top:493px;width:110px">Henrique Santos</div>
<div class="c" style="left:828px;top:514px;width:110px">Isabella Rocha</div>
<div class="c" style="left:828px;top:535px;width:110px">João Santos</div>
<div class="c" style="left:828px;top:556px;width:110px">Lucas Silva</div>
<div class="c" style="left:828px;top:577px;width:110px">Luiza Dias</div>
<div class="c" style="left:828px;top:598px;width:110px">Maria Oliveira</div>
<div class="c" style="left:828px;top:619px;width:110px">Mariana Oliveira</div>
<div class="c" style="left:828px;top:640px;width:110px">Pedro Souza</div>
<div class="c" style="left:939px;top:157px;width:100px">Total</div>
<div class="c r" style="left:939px;top:178px;width:100px">46</div>
<div class="c r" style="left:939px;top:199px;width:100px">25</div>
<div class="c" style="left:939px;top:241px;width:100px">sum Valor (R$)</div>
<div class="c r" style="left:939px;top:262px;width:100px">929,1</div>
<div class="c r" style="left:939px;top:283px;width:100px">139,8</div>
<div class="c r" style="left:939px;top:304px;width:100px">59,9</div>
<div class="c r" style="left:939px;top:325px;width:100px">99,8</div>
<div class="c r" style="left:939px;top:346px;width:100px">99,8</div>
<div class="c r" style="left:939px;top:367px;width:100px">399,8</div>
<div class="c r" style="left:939px;top:388px;width:100px">2808,3</div>
<div class="c r" style="left:939px;top:409px;width:100px">159,8</div>
<div class="c r" style="left:939px;top:430px;width:100px">179,7</div>
<div class="c r" style="left:939px;top:451px;width:100px">159,8</div>
<div class="c r" style="left:939px;top:472px;width:100px">139,8</div>
<div class="c r" style="left:939px;top:493px;width:100px">239,7</div>
<div class="c r" style="left:939px;top:514px;width:100px">379,8</div>
<div class="c r" style="left:939px;top:535px;width:100px">259,8</div>
<div class="c r" style="left:939px;top:556px;width:100px">59,8</div>
<div class="c r" style="left:939px;top:577px;width:100px">1378,8</div>
<div class="c r" style="left:939px;top:598px;width:100px">499,8</div>
<div class="c r" style="left:939px;top:619px;width:100px">319,8</div>
<div class="c r" style="left:939px;top:640px;width:100px">179,8</div>
<div class="c" style="left:1040px;top:157px;width:100px">Total &gt; R$49</div>
<div class="c r" style="left:1040px;top:178px;width:100px">41</div>
<div class="c r" style="left:1040px;top:199px;width:100px">25</div>

<!-- selection -->
<div class="a" style="left:827px;top:240px;width:108px;height:18px;border:2px solid #1a6be4"></div>
<div class="a" style="left:934px;top:257px;width:8px;height:8px;border-radius:50%;background:#0b57d0;border:1px solid #fff"></div>

<!-- red annotation -->
<svg class="a" style="left:0;top:0" width="1292" height="742" viewBox="0 0 1292 742">
  <rect x="121.1" y="100.4" width="495.6" height="31.4" fill="none" stroke="#ff0000" stroke-width="3.6"/>
  <line x1="616.4" y1="130" x2="795" y2="308" stroke="#ff0000" stroke-width="3.7"/>
  <path d="M809.8 322.8L787.4 311.6L798.6 300.4Z" fill="#ff0000"/>
</svg>

</body></html>
